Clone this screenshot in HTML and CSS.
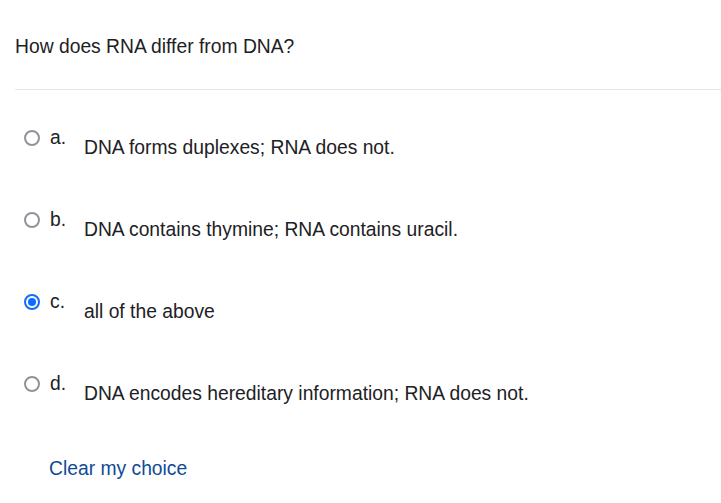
FILE: index.html
```html
<!DOCTYPE html>
<html>
<head>
<meta charset="utf-8">
<link rel="stylesheet" href="styles.css">
</head>
<body>
<div class="que">
  <div class="qtext">How does RNA differ from DNA?</div>
  <div class="answers">
    <div class="opt">
      <span class="radio"></span>
      <span class="lbl">a.</span>
      <span class="ans">DNA forms duplexes; RNA does not.</span>
    </div>
    <div class="opt">
      <span class="radio"></span>
      <span class="lbl">b.</span>
      <span class="ans">DNA contains thymine; RNA contains uracil.</span>
    </div>
    <div class="opt">
      <span class="radio checked"></span>
      <span class="lbl">c.</span>
      <span class="ans">all of the above</span>
    </div>
    <div class="opt">
      <span class="radio"></span>
      <span class="lbl">d.</span>
      <span class="ans">DNA encodes hereditary information; RNA does not.</span>
    </div>
  </div>
  <a class="clear" href="#">Clear my choice</a>
</div>
</body>
</html>
```
FILE: styles.css
```css
html, body {
  margin: 0;
  padding: 0;
  background: #ffffff;
}
body {
  font-family: "Liberation Sans", Arial, sans-serif;
  font-size: 19.3px;
  color: #1d2125;
}
.que {
  padding: 33px 0 0 15px;
}
.qtext {
  line-height: 28px;
  padding-bottom: 28px;
  border-bottom: 1px solid #e6e6e6;
}
.answers {
  display: flex;
  flex-direction: column;
  padding-top: 34px;
  padding-left: 9px;
}
.opt {
  display: flex;
  align-items: flex-start;
  height: 82px;
}
.radio {
  box-sizing: border-box;
  width: 16px;
  height: 16px;
  margin-top: 6px;
  border: 2px solid #8f949b;
  border-radius: 50%;
  flex: none;
  display: flex;
  align-items: center;
  justify-content: center;
}
.radio.checked {
  border: 2px solid #0f6cfd;
}
.radio.checked::after {
  content: "";
  width: 8px;
  height: 8px;
  border-radius: 50%;
  background: #0f6cfd;
}
.lbl {
  line-height: 28px;
  margin-left: 10px;
  width: 34px;
  flex: none;
}
.ans {
  line-height: 28px;
  padding-top: 10px;
}
.clear {
  display: inline-block;
  margin-top: 3px;
  margin-left: 34px;
  line-height: 28px;
  color: #0f4a96;
  text-decoration: none;
}
```
